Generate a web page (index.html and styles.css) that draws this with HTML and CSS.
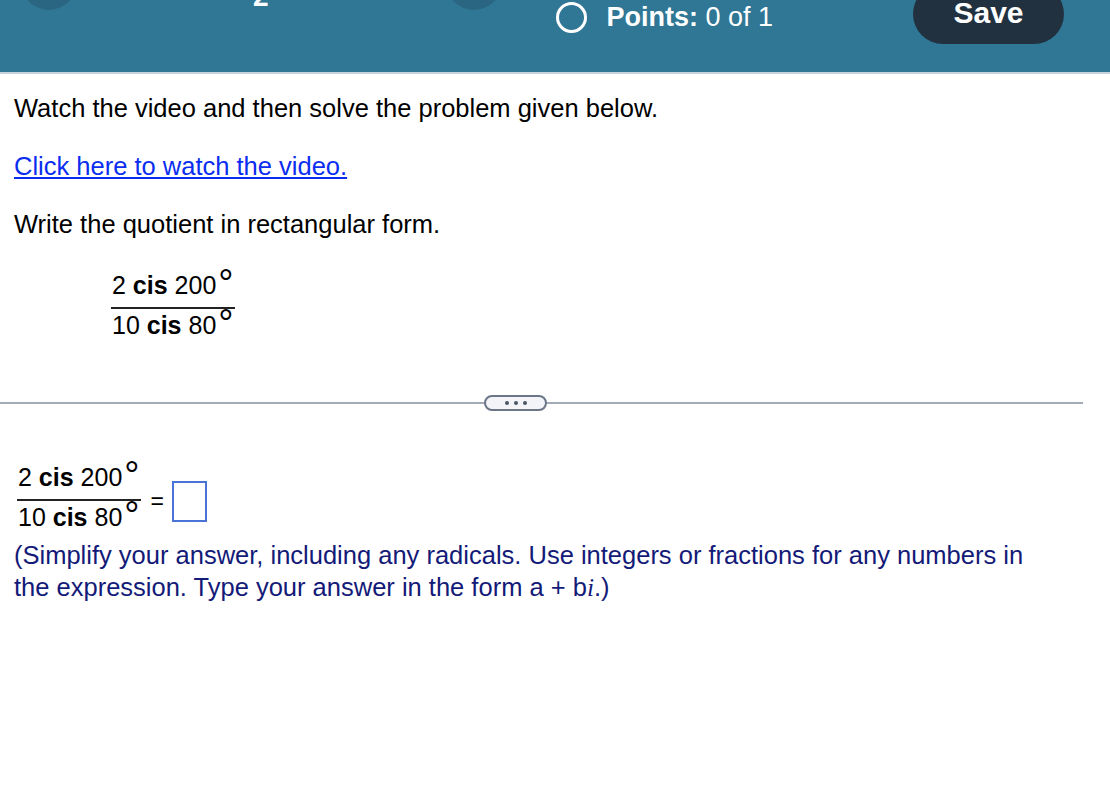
FILE: index.html
```html
<!DOCTYPE html>
<html>
  <head>
    <title>Question</title>
    <link rel="stylesheet" href="styles.css">
  </head>
  <body>
    <header class="topbar">
      <div class="nav-dot dot-one"></div>
      <span class="nav-num">2</span>
      <div class="nav-dot dot-two"></div>
      <div class="points">
        <span class="radio"></span>
        <span><b>Points:</b> 0 of 1</span>
      </div>
      <button class="save">Save</button>
    </header>

    <main class="question">
      <p class="line">Watch the video and then solve the problem given below.</p>
      <p class="line"><a href="#">Click here to watch the video.</a></p>
      <p class="line">Write the quotient in rectangular form.</p>

      <div class="frac big">
        <span class="num">2 <b>cis</b> 200<sup>°</sup></span>
        <span class="den">10 <b>cis</b> 80<sup>°</sup></span>
      </div>

      <div class="divider">
        <span class="more"><i></i><i></i><i></i></span>
      </div>

      <div class="answer-row">
        <div class="frac">
          <span class="num">2 <b>cis</b> 200<sup>°</sup></span>
          <span class="den">10 <b>cis</b> 80<sup>°</sup></span>
        </div>
        <span class="eq">=</span>
        <span class="box"></span>
      </div>

      <p class="hint">(Simplify your answer, including any radicals. Use integers or fractions for any numbers in the expression. Type your answer in the form a + b<em>i</em>.)</p>
    </main>
  </body>
</html>
```

FILE: styles.css
```css
body {
  margin: 0;
  font-family: "Liberation Sans", Arial, sans-serif;
  color: #000;
  background: #fff;
}

.topbar {
  height: 72px;
  background: #307795;
  border-bottom: 2px solid #c6d4de;
  display: flex;
  align-items: flex-start;
  overflow: hidden;
  color: #fff;
}
.nav-dot {
  width: 56px;
  height: 56px;
  border-radius: 50%;
  background: #2a6581;
  margin-top: -46px;
  flex: none;
}
.dot-one {
  margin-left: 21px;
}
.nav-num {
  font-size: 28px;
  font-weight: bold;
  line-height: 28px;
  margin-top: -17px;
  margin-left: 176px;
}
.dot-two {
  margin-left: 177px;
}
.points {
  display: flex;
  align-items: center;
  gap: 20px;
  margin-left: 54px;
  margin-top: 2px;
  font-size: 27px;
  line-height: 29px;
}
.radio {
  width: 25px;
  height: 25px;
  border: 3px solid #fff;
  border-radius: 50%;
}
.save {
  margin-left: auto;
  margin-right: 46px;
  margin-top: -16px;
  width: 151px;
  height: 60px;
  border: none;
  border-radius: 30px;
  background: #22313f;
  color: #fff;
  font-family: "Liberation Sans", Arial, sans-serif;
  font-size: 30px;
  font-weight: bold;
  line-height: 30px;
  padding: 0 0 2px;
}

.question {
  padding: 19px 14px 0;
  font-size: 25.5px;
}
.line {
  margin: 0 0 28px;
  line-height: 30px;
}
.line a {
  color: #0a2df0;
}

.frac {
  display: inline-flex;
  flex-direction: column;
  align-items: center;
  font-size: 25px;
  line-height: 30px;
}
.frac .num {
  padding: 0 1px 7px;
  border-bottom: 2px solid #222;
}
.frac .den {
  padding: 1px 1px 0;
}
.frac sup {
  font-size: 38px;
  line-height: 0;
  vertical-align: -2px;
  padding-left: 2px;
}
.big {
  margin-left: 97px;
  margin-top: 3px;
}

.divider {
  margin: 62px -14px 0;
  height: 2px;
  width: 1083px;
  background: #a3abb8;
  display: flex;
  align-items: center;
  padding-left: 484px;
  box-sizing: border-box;
}
.more {
  width: 59px;
  height: 12px;
  border: 2px solid #6b7788;
  border-radius: 8px;
  background: #f3f4f7;
  display: flex;
  justify-content: center;
  align-items: center;
  gap: 5px;
}
.more i {
  width: 4px;
  height: 4px;
  border-radius: 50%;
  background: #4b5563;
}

.answer-row {
  margin-top: 58px;
  display: flex;
  align-items: center;
  padding-left: 3px;
}
.eq {
  margin: 8px 8px 0 10px;
  font-size: 23px;
}
.box {
  width: 31px;
  height: 37px;
  border: 2px solid #4a73d8;
  margin-top: 9px;
}

.hint {
  margin: 7px 0 0;
  max-width: 1040px;
  color: #131a78;
  line-height: 32px;
}
.hint em {
  font-family: "Liberation Serif", serif;
}
```
